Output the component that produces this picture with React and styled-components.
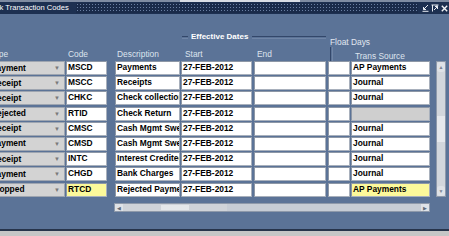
import React from 'react';
import styled, { createGlobalStyle } from 'styled-components';

const GlobalStyle = createGlobalStyle`
  html, body { margin: 0; padding: 0; background: #c6c6c6; overflow: hidden; }
  body { font-family: "Liberation Sans", Arial, sans-serif; }
`;

const Window = styled.div`
  margin-left: -16px;
  width: 465px;
  height: 236px;
  display: flex;
  flex-direction: column;
  background: #5b7397;
`;

const TopStrip = styled.div`
  height: 2px;
  background: linear-gradient(90deg, #7f8ca2 0 196px, #d9dde4 196px 316px, #7f8ca2 316px);
`;

const TitleBar = styled.div`
  height: 12px;
  background: #1d3051;
  display: flex;
  align-items: center;
  padding-left: 2px;
`;

const TitleText = styled.span`
  color: #ffffff;
  font-size: 7.6px;
  line-height: 12px;
  white-space: nowrap;
  width: 90px;
  flex: none;
`;

const Texture = styled.div`
  width: 342px;
  height: 10px;
  background-color: #1a2b4a;
  background-image: radial-gradient(circle, #6a7fa3 0.6px, transparent 0.9px);
  background-size: 3px 3px;
`;

const Controls = styled.div`
  display: flex;
  align-items: center;
  gap: 2px;
  padding-left: 4px;
`;

const Body = styled.div`
  flex: 1;
  display: flex;
  flex-direction: column;
`;

const Header = styled.div`
  height: 47px;
  display: flex;
  align-items: stretch;
`;

const HeadCell = styled.div`
  width: ${p => p.$w}px;
  margin-left: ${p => p.$ml || 0}px;
  display: flex;
  flex-direction: column;
  justify-content: flex-end;
  flex: none;
`;

const Label = styled.span`
  color: #dde4ee;
  font-size: 8.4px;
  line-height: 10px;
  padding-left: ${p => p.$pl || 0}px;
  padding-bottom: 2px;
  white-space: nowrap;
`;

const Group = styled.div`
  width: ${p => p.$w}px;
  margin-left: ${p => p.$ml || 0}px;
  display: flex;
  flex-direction: column;
  flex: none;
`;

const FrameTitle = styled.div`
  margin-top: 18px;
  height: 10px;
  display: flex;
  align-items: center;
  gap: 3px;
`;

const FrameLine = styled.div`
  height: 1px;
  border-top: 1px solid #33476a;
  border-bottom: 1px solid #7085a6;
  width: ${p => (p.$w ? `${p.$w}px` : 'auto')};
  flex: ${p => (p.$w ? 'none' : '1')};
  margin-left: ${p => p.$ml || 0}px;
`;

const FrameText = styled.span`
  color: #ffffff;
  font-weight: bold;
  font-size: 8px;
  line-height: 10px;
  white-space: nowrap;
  padding-right: 1px;
`;

const SubRow = styled.div`
  margin-top: auto;
  display: flex;
  align-items: flex-end;
`;

const FloatLabel = styled.span`
  margin-top: 23px;
  height: 10px;
  line-height: 10px;
  padding-left: 2px;
  color: #e2e8f1;
  font-size: 8.4px;
  white-space: nowrap;
`;

const VLine = styled.div`
  width: 1px;
  height: 15px;
  margin-left: 2px;
  margin-bottom: 1px;
  border-left: 1px solid #33476a;
  border-right: 1px solid #7085a6;
`;

const Table = styled.div`
  display: flex;
  align-items: flex-start;
`;

const Rows = styled.div`
  display: flex;
  flex-direction: column;
  gap: 1.2px;
`;

const Row = styled.div`
  display: flex;
  height: 14px;
`;

const tones = {
  white: '#ffffff',
  gray: '#cfcfcf',
  yellow: '#fcf99b',
};

const Cell = styled.div`
  box-sizing: border-box;
  width: ${p => p.$w}px;
  margin-left: ${p => p.$ml || 0}px;
  height: 14px;
  flex: none;
  border: 1px solid #a8b0bc;
  border-top-color: #8d97a6;
  border-left-color: #8d97a6;
  background: ${p => tones[p.$tone || 'white']};
  color: #000;
  font-weight: bold;
  font-size: 8.4px;
  line-height: 11px;
  padding-left: ${p => p.$pl ?? 1}px;
  white-space: nowrap;
  overflow: hidden;
`;

const Select = styled.div`
  box-sizing: border-box;
  width: 81px;
  height: 14px;
  flex: none;
  display: flex;
  align-items: center;
  justify-content: space-between;
  background: #d3d3d3;
  border: 1px solid #9ea5b0;
  padding: 0 4px 0 6px;
  font-weight: bold;
  font-size: 8.4px;
  line-height: 11px;
  color: #000;
`;

const Arrow = styled.span`
  font-size: 6px;
  color: #7a7a7a;
  line-height: 6px;
`;

const VScroll = styled.div`
  margin-left: 6px;
  width: 10px;
  height: 136px;
  box-sizing: border-box;
  border: 1px solid #8e99aa;
  background: #d2d6dc;
  display: flex;
  flex-direction: column;
`;

const VBtn = styled.div`
  height: 10px;
  display: flex;
  align-items: center;
  justify-content: center;
  background: #dfe2e7;
  border-radius: 3px;
  color: #7c8594;
  font-size: 5px;
`;

const VTrack = styled.div`
  flex: 1;
  display: flex;
  flex-direction: column;
  justify-content: center;
`;

const Dots = styled.div`
  width: ${p => p.$w}px;
  height: ${p => p.$h}px;
  margin: ${p => p.$m || '0'};
  background-image: radial-gradient(circle, #f4f6f8 0.6px, transparent 0.9px);
  background-size: 2px 2px;
  opacity: 0.9;
`;

const HScroll = styled.div`
  margin-top: 6px;
  margin-left: 130px;
  width: 316px;
  height: 9px;
  box-sizing: border-box;
  border: 1px solid #8e99aa;
  background: #c6ccd5;
  display: flex;
`;

const HBtn = styled.div`
  width: 8px;
  display: flex;
  align-items: center;
  justify-content: center;
  background: #dfe2e7;
  color: #606a78;
  font-size: 5px;
`;

const HThumb = styled.div`
  width: 104px;
  display: flex;
  align-items: center;
  justify-content: center;
  background: #cfd3d9;
`;

const Spacer = styled.div`
  flex: 1;
`;

const BottomEdge = styled.div`
  height: 2px;
  background: #27344b;
`;

const Footer = styled.div`
  height: 5px;
  background: #c6c6c6;
`;

const cols = {
  code: { ml: 1, w: 41 },
  desc: { ml: 8, w: 65 },
  start: { ml: 1, w: 71 },
  end: { ml: 2, w: 72 },
  flt: { ml: 2, w: 22 },
  trans: { ml: 1, w: 79 },
};

const rows = [
  { type: 'Payment', code: 'MSCD', desc: 'Payments', trans: 'AP Payments' },
  { type: 'Receipt', code: 'MSCC', desc: 'Receipts', trans: 'Journal' },
  { type: 'Receipt', code: 'CHKC', desc: 'Check collection', trans: 'Journal' },
  { type: 'Rejected', code: 'RTID', desc: 'Check Return', trans: '', transTone: 'gray' },
  { type: 'Receipt', code: 'CMSC', desc: 'Cash Mgmt Sweep', trans: 'Journal' },
  { type: 'Payment', code: 'CMSD', desc: 'Cash Mgmt Sweep', trans: 'Journal' },
  { type: 'Receipt', code: 'INTC', desc: 'Interest Credited', trans: 'Journal' },
  { type: 'Payment', code: 'CHGD', desc: 'Bank Charges', trans: 'Journal' },
  { type: 'Stopped', code: 'RTCD', desc: 'Rejected Payment', trans: 'AP Payments', codeTone: 'yellow', transTone: 'yellow' },
];

const MinIcon = () => (
  <svg width="7" height="8" viewBox="0 0 7 8">
    <path d="M6 1 L1.5 5.5 M1.5 3 V5.5 H4 M0.5 7.3 H6.5" stroke="#e8ecf2" strokeWidth="1" fill="none" />
  </svg>
);

const MaxIcon = () => (
  <svg width="8" height="8" viewBox="0 0 8 8">
    <path d="M0.5 1 H7.5 M1.5 1 V7.5 M6 1 V3 M3 6 L6.5 2.5 M4 2.5 H6.5 V5" stroke="#e8ecf2" strokeWidth="1" fill="none" />
  </svg>
);

const CloseIcon = () => (
  <svg width="7" height="7" viewBox="0 0 7 7">
    <path d="M0.8 0.8 L6.2 6.2 M6.2 0.8 L0.8 6.2" stroke="#f2f4f7" strokeWidth="1.4" fill="none" />
  </svg>
);

export default function App() {
  return (
    <>
      <GlobalStyle />
      <Window>
        <TopStrip />
        <TitleBar>
          <TitleText>Bank Transaction Codes</TitleText>
          <Texture />
          <Controls>
            <MinIcon />
            <MaxIcon />
            <CloseIcon />
          </Controls>
        </TitleBar>
        <Body>
          <Header>
            <HeadCell $w={81}>
              <Label $pl={6}>Type</Label>
            </HeadCell>
            <HeadCell $w={cols.code.w} $ml={cols.code.ml}>
              <Label $pl={2}>Code</Label>
            </HeadCell>
            <HeadCell $w={cols.desc.w} $ml={cols.desc.ml}>
              <Label $pl={2}>Description</Label>
            </HeadCell>
            <Group $w={cols.start.w + cols.end.ml + cols.end.w} $ml={cols.start.ml}>
              <FrameTitle>
                <FrameLine $w={6} $ml={1} />
                <FrameText>Effective Dates</FrameText>
                <FrameLine />
              </FrameTitle>
              <SubRow>
                <HeadCell $w={cols.start.w}>
                  <Label $pl={4}>Start</Label>
                </HeadCell>
                <HeadCell $w={cols.end.w} $ml={cols.end.ml}>
                  <Label $pl={3}>End</Label>
                </HeadCell>
              </SubRow>
            </Group>
            <Group $w={cols.flt.w + cols.trans.ml + cols.trans.w} $ml={cols.flt.ml}>
              <FloatLabel>Float Days</FloatLabel>
              <SubRow>
                <VLine />
                <HeadCell $w={70} $ml={22}>
                  <Label>Trans Source</Label>
                </HeadCell>
              </SubRow>
            </Group>
          </Header>
          <Table>
            <Rows>
              {rows.map(r => (
                <Row key={r.code}>
                  <Select>
                    <span>{r.type}</span>
                    <Arrow>▼</Arrow>
                  </Select>
                  <Cell $w={cols.code.w} $ml={cols.code.ml} $tone={r.codeTone}>{r.code}</Cell>
                  <Cell $w={cols.desc.w} $ml={cols.desc.ml}>{r.desc}</Cell>
                  <Cell $w={cols.start.w} $ml={cols.start.ml}>27-FEB-2012</Cell>
                  <Cell $w={cols.end.w} $ml={cols.end.ml} />
                  <Cell $w={cols.flt.w} $ml={cols.flt.ml} />
                  <Cell $w={cols.trans.w} $ml={cols.trans.ml} $tone={r.transTone}>{r.trans}</Cell>
                </Row>
              ))}
            </Rows>
            <VScroll>
              <VBtn>▲</VBtn>
              <VTrack>
                <Dots $w={8} $h={26} $m="0 0 0 0" />
              </VTrack>
              <VBtn>▼</VBtn>
            </VScroll>
          </Table>
          <HScroll>
            <HBtn>◀</HBtn>
            <HThumb>
              <Dots $w={28} $h={5} />
            </HThumb>
            <Spacer />
            <HBtn>▶</HBtn>
          </HScroll>
          <Spacer />
        </Body>
        <BottomEdge />
        <Footer />
      </Window>
    </>
  );
}
